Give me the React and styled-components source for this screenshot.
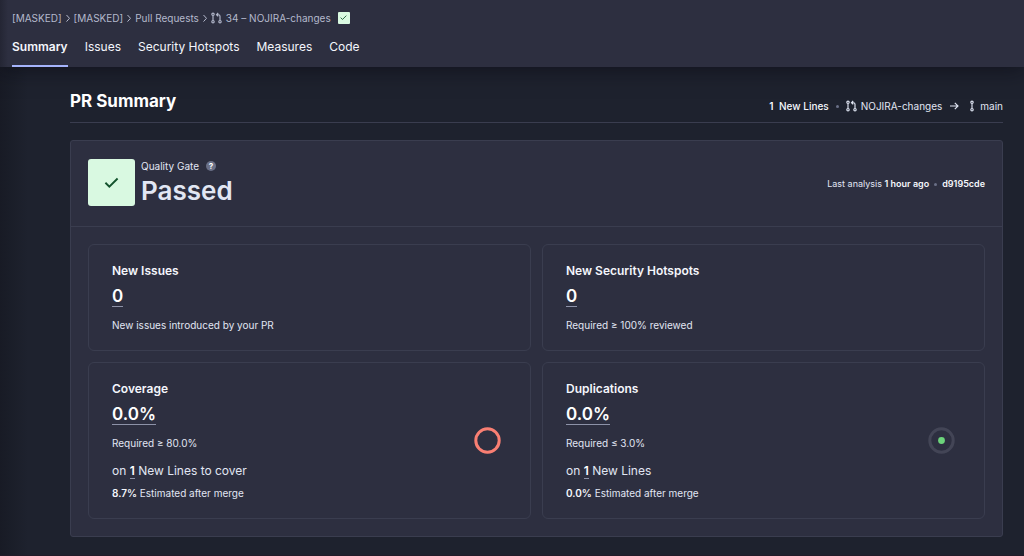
import React from 'react';
import styled, { createGlobalStyle } from 'styled-components';

const GlobalStyle = createGlobalStyle`
  * {
    box-sizing: border-box;
  }

  body {
    margin: 0;
    background-color: #1e222e;
    color: #e1e6f3;
    font-family: 'Inter', 'Liberation Sans', sans-serif;
    font-size: 10px;
    line-height: 16px;
  }

  a {
    color: inherit;
    text-decoration: none;
  }
`;

const Page = styled('div')`
  min-height: 100vh;
  border-bottom: 1px solid #231b29;
  background-image: linear-gradient(to right, rgba(15, 16, 24, 0.4), rgba(15, 16, 24, 0) 28px);
`;

const Header = styled('header')`
  padding: 9px 12px 0;
  background-color: #2d2f40;
  background-image: linear-gradient(to right, rgba(15, 16, 24, 0.3), rgba(15, 16, 24, 0) 8px);
  box-shadow: 0 2px 20px rgba(8, 9, 18, 0.6);
`;

const Breadcrumbs = styled('nav')`
  display: flex;
  align-items: center;
  gap: 4px;
  height: 17px;
  color: #b4b9cc;
`;

const Crumb = styled('a')`
  display: flex;
  align-items: center;
  gap: 4px;
`;

const StatusBadge = styled('span')`
  display: flex;
  align-items: center;
  justify-content: center;
  width: ${p => (p.$large ? 47 : 12)}px;
  height: ${p => (p.$large ? 47 : 12)}px;
  margin-left: ${p => (p.$large ? 0 : 3)}px;
  border-radius: ${p => (p.$large ? 3 : 1)}px;
  background-color: #d9f9e1;
  color: #14532d;
`;

const Tabs = styled('nav')`
  display: flex;
  gap: 17px;
  height: 41px;
`;

const Tab = styled('a')`
  padding-top: 13px;
  border-bottom: 2px solid ${p => (p.$active ? '#a5b4fc' : 'transparent')};
  color: #f4f6fc;
  font-size: 12px;
  font-weight: ${p => (p.$active ? 600 : 400)};
`;

const Main = styled('main')`
  padding: 22px 21px 18px 70px;
`;

const TitleRow = styled('div')`
  display: flex;
  align-items: flex-end;
  justify-content: space-between;
  padding-bottom: 8px;
  border-bottom: 1px solid #3a3d4f;
`;

const Title = styled('h1')`
  margin: 0 0 1px;
  color: #ffffff;
  font-size: 17px;
  font-weight: 700;
  line-height: 24px;
`;

const Meta = styled('div')`
  display: flex;
  align-items: center;
  gap: ${p => (p.$small ? 5 : 7)}px;
  font-size: ${p => (p.$small ? 9 : 10)}px;
`;

const LineCount = styled('span')`
  color: #f4f6fc;
  font-weight: 500;

  strong {
    margin-right: 3px;
    font-weight: 600;
  }
`;

const Branch = styled('span')`
  display: flex;
  align-items: center;
  gap: 4px;
`;

const Dot = styled('span')`
  width: 3px;
  height: 3px;
  border-radius: 50%;
  background-color: #6a7087;
`;

const Panel = styled('section')`
  margin-top: 17px;
  border: 1px solid #3a3d4f;
  border-radius: 3px;
  background-color: #2d2f40;
`;

const Gate = styled('div')`
  display: flex;
  align-items: center;
  justify-content: space-between;
  padding: 18px 17px 17px;
  border-bottom: 1px solid #3a3d4f;
`;

const GateStatus = styled('div')`
  display: flex;
  gap: 6px;
`;

const GateLabel = styled('div')`
  display: flex;
  align-items: center;
  gap: 7px;
  height: 14px;
`;

const GateValue = styled('div')`
  font-size: 26px;
  font-weight: 600;
  line-height: 36px;
`;

const HelpButton = styled('button')`
  width: 10px;
  height: 10px;
  padding: 0;
  border: 0;
  border-radius: 50%;
  background-color: #6a7087;
  color: #ffffff;
  font-family: inherit;
  font-size: 8px;
  font-weight: 700;
  line-height: 10px;
`;

const Strong = styled('strong')`
  color: #f4f6fc;
  font-weight: 600;
`;

const Grid = styled('div')`
  display: grid;
  grid-template-columns: 1fr 1fr;
  gap: 11px;
  padding: 17px;
`;

const Card = styled('article')`
  display: flex;
  align-items: center;
  justify-content: space-between;
  padding: 17px 29px 17px 23px;
  border: 1px solid #3a3d4f;
  border-radius: 6px;
`;

const CardTitle = styled('h2')`
  margin: 0;
  color: #f4f6fc;
  font-size: 12px;
  font-weight: 600;
  line-height: 18px;
`;

const Value = styled('a')`
  display: inline-block;
  margin: 6px 0 10px;
  border-bottom: 1px solid #8d92a8;
  color: #ffffff;
  font-size: 17px;
  font-weight: 600;
  line-height: 20px;
`;

const Requirement = styled('div')`
  line-height: 16px;
`;

const OnLines = styled('div')`
  margin: 12px 0 6px;
  font-size: 12px;
  line-height: 16px;

  a {
    border-bottom: 1px solid #8d92a8;
    color: #ffffff;
    font-weight: 600;
  }
`;

const measures = [
  { title: 'New Issues', value: '0', note: 'New issues introduced by your PR' },
  { title: 'New Security Hotspots', value: '0', note: 'Required ≥ 100% reviewed' },
  {
    title: 'Coverage',
    value: '0.0%',
    note: 'Required ≥ 80.0%',
    lines: 'New Lines to cover',
    estimate: '8.7%',
    chart: 'coverage',
  },
  {
    title: 'Duplications',
    value: '0.0%',
    note: 'Required ≤ 3.0%',
    lines: 'New Lines',
    estimate: '0.0%',
    chart: 'duplications',
  },
];

const tabs = ['Summary', 'Issues', 'Security Hotspots', 'Measures', 'Code'];

const Chevron = () => (
  <svg width="4" height="10" viewBox="0 0 4 10" fill="none" stroke="currentColor">
    <path d="M0.5 2l3 3.3-3 3.3" />
  </svg>
);

const Check = ({ size }) => (
  <svg width={size} height={size} viewBox="0 0 16 16" fill="none" stroke="currentColor" strokeWidth="2">
    <path d="M1.5 8.3l4.2 4.2 8.8-8.8" />
  </svg>
);

const PullRequestIcon = () => (
  <svg
    width="11"
    height="12"
    viewBox="0 0 11 12"
    fill="none"
    stroke="currentColor"
    strokeWidth="1.15"
  >
    <circle cx="2" cy="2.3" r="1.2" />
    <circle cx="2" cy="9.7" r="1.2" />
    <circle cx="9" cy="9.7" r="1.2" />
    <path d="M2 3.5v5M9 8.5V4.2Q9 2.7 7.5 2.7H5.5M7.2 1L5.5 2.7l1.7 1.7" />
  </svg>
);

const BranchIcon = () => (
  <svg
    width="8"
    height="12"
    viewBox="0 0 8 12"
    fill="none"
    stroke="currentColor"
    strokeWidth="1.15"
  >
    <circle cx="4" cy="2.3" r="1.2" />
    <circle cx="4" cy="9.7" r="1.2" />
    <path d="M4 3.5v5" />
  </svg>
);

const Arrow = () => (
  <svg
    width="12"
    height="12"
    viewBox="0 0 12 12"
    fill="none"
    stroke="currentColor"
    strokeWidth="1.15"
  >
    <path d="M1 6h8M5.8 2.8L9 6 5.8 9.2" />
  </svg>
);

const Ring = ({ type }) => (
  <svg width="27" height="27" viewBox="0 0 27 27" fill="none">
    <circle
      cx="13.5"
      cy="13.5"
      r="11.7"
      stroke={type === 'coverage' ? '#f97f73' : '#434556'}
      strokeWidth="3"
    />
    {type === 'duplications' && <circle cx="13.5" cy="13.5" r="3.4" fill="#6cd47b" />}
  </svg>
);

const MeasureCard = ({ title, value, note, lines, estimate, chart }) => (
  <Card>
    <div>
      <CardTitle>{title}</CardTitle>
      <Value href="#">{value}</Value>
      <Requirement>{note}</Requirement>
      {lines && (
        <>
          <OnLines>
            on <a href="#">1</a> {lines}
          </OnLines>
          <div>
            <Strong>{estimate}</Strong> Estimated after merge
          </div>
        </>
      )}
    </div>
    {chart && <Ring type={chart} />}
  </Card>
);

export default function App() {
  return (
    <Page>
      <GlobalStyle />
      <Header>
        <Breadcrumbs aria-label="Breadcrumbs">
          <Crumb href="#">[MASKED]</Crumb>
          <Chevron />
          <Crumb href="#">[MASKED]</Crumb>
          <Chevron />
          <Crumb href="#">Pull Requests</Crumb>
          <Chevron />
          <Crumb href="#">
            <PullRequestIcon />
            34 – NOJIRA-changes
          </Crumb>
          <StatusBadge>
            <Check size={7} />
          </StatusBadge>
        </Breadcrumbs>
        <Tabs>
          {tabs.map((tab, i) => (
            <Tab key={tab} href="#" $active={i === 0}>
              {tab}
            </Tab>
          ))}
        </Tabs>
      </Header>
      <Main>
        <TitleRow>
          <Title>PR Summary</Title>
          <Meta>
            <LineCount>
              <strong>1</strong> New Lines
            </LineCount>
            <Dot />
            <Branch>
              <PullRequestIcon />
              NOJIRA-changes
            </Branch>
            <Arrow />
            <Branch>
              <BranchIcon />
              main
            </Branch>
          </Meta>
        </TitleRow>
        <Panel>
          <Gate>
            <GateStatus>
              <StatusBadge $large>
                <Check size={15} />
              </StatusBadge>
              <div>
                <GateLabel>
                  Quality Gate
                  <HelpButton aria-label="Help">?</HelpButton>
                </GateLabel>
                <GateValue>Passed</GateValue>
              </div>
            </GateStatus>
            <Meta $small>
              <span>
                Last analysis <Strong>1 hour ago</Strong>
              </span>
              <Dot />
              <Strong>d9195cde</Strong>
            </Meta>
          </Gate>
          <Grid>
            {measures.map(measure => (
              <MeasureCard key={measure.title} {...measure} />
            ))}
          </Grid>
        </Panel>
      </Main>
    </Page>
  );
}
